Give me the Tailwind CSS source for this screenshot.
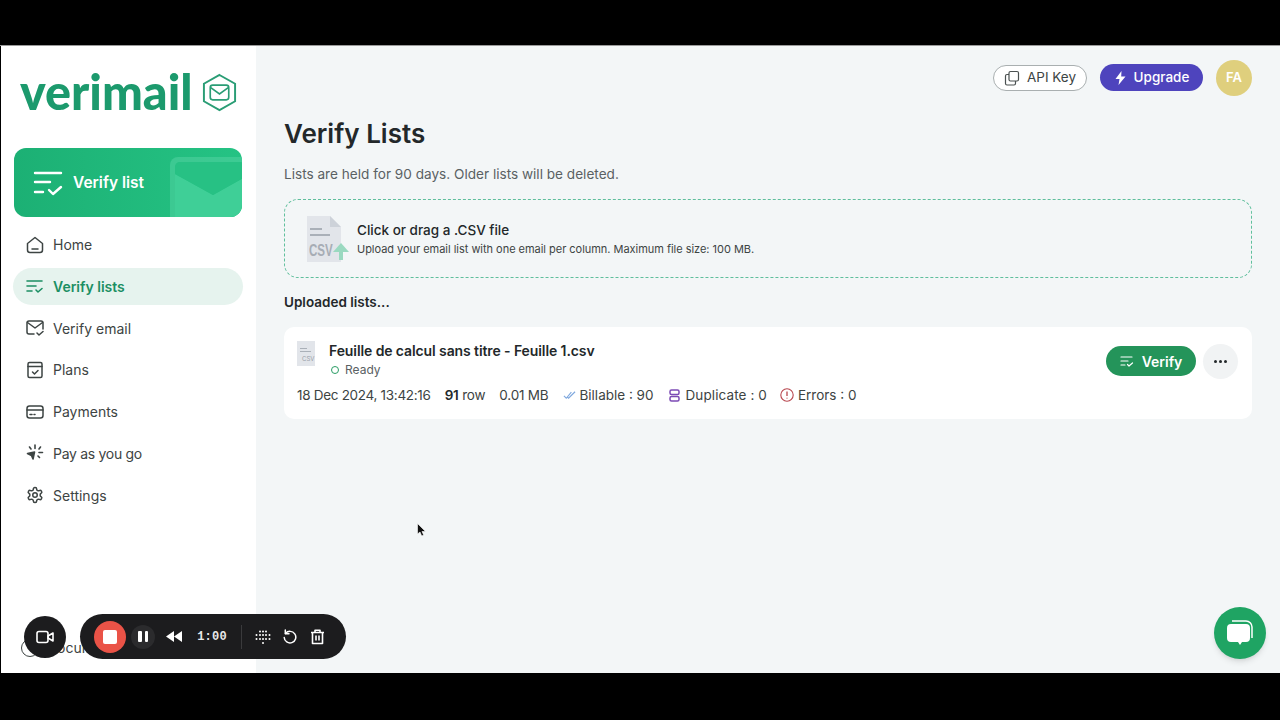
<!DOCTYPE html>
<html lang="en">
<head>
<meta charset="UTF-8">
<title>Verimail - Verify Lists</title>
<script src="https://cdn.jsdelivr.net/npm/@tailwindcss/browser@4"></script>
</head>
<body class="bg-black font-['Inter',sans-serif] overflow-hidden">
<div class="w-[1280px] h-[720px] pt-[45px] pb-[47px] bg-black">
  <div class="relative flex h-[628px] bg-[#f3f6f7] border-t border-[#9a9a9a]">

    <!-- Sidebar -->
    <aside class="w-[256px] h-full bg-white border-l border-black flex flex-col shrink-0">
      <div class="flex items-center gap-[8px] pl-[19px] h-[91px]">
        <span class="w-[173px] font-['Lato',sans-serif] font-black text-[48.5px] leading-none text-[#1c9a6d] whitespace-nowrap">verimail</span>
        <svg class="w-[37px] h-[39px] mt-[2px]" viewBox="0 0 38 40" fill="none" stroke="#2a9d75" stroke-width="2">
          <path d="M19 2 35 11V29L19 38 3 29V11Z"/>
          <rect x="9.5" y="12.5" width="19" height="15" rx="2.5" stroke-width="1.7"/>
          <path d="M10 15l9 6.5L28 15" stroke-width="1.7"/>
        </svg>
      </div>

      <div class="relative mt-[11px] ml-[13px] w-[228px] h-[69px] rounded-[12px] bg-gradient-to-r from-[#1cb074] to-[#25c384] overflow-hidden flex items-center pl-[19px] gap-[10px]">
        <svg class="w-[30px] h-[26px]" viewBox="0 0 30 26" fill="none" stroke="white" stroke-width="2.4" stroke-linecap="round" stroke-linejoin="round">
          <path d="M2 3h26M2 12h15M2 22h8M16 20l4 4 8-7"/>
        </svg>
        <span class="text-white font-semibold text-[15.5px]">Verify list</span>
        <div class="absolute left-[156px] top-[9px] w-[80px] h-[70px] rounded-[8px] bg-[#4fd19e]/60 p-[5px]">
          <div class="relative w-full h-full rounded-[5px] bg-[#2bc488] overflow-hidden">
            <svg class="absolute inset-0 w-full h-full" viewBox="0 0 70 60" preserveAspectRatio="none"><path d="M0 12 38 33 70 15V60H0Z" fill="#3fcf97"/><path d="M0 0H70V15L38 33 0 12Z" fill="#27c184"/></svg>
          </div>
        </div>
      </div>

      <nav class="mt-[9px] ml-[12px] w-[230px] flex flex-col gap-[4.8px] text-[14px] text-[#3d4443]">
        <a class="flex items-center gap-[9px] h-[37px] pl-[13px] rounded-full">
          <svg class="w-[18px] h-[18px]" viewBox="0 0 18 18" fill="none" stroke="#3d4443" stroke-width="1.5" stroke-linejoin="round" stroke-linecap="round"><path d="M1.5 7.5 9 1.5l7.5 6V14a2.5 2.5 0 0 1-2.5 2.5H4A2.5 2.5 0 0 1 1.5 14Z"/><path d="M6 13h6"/></svg>
          Home
        </a>
        <a class="flex items-center gap-[9px] h-[37px] pl-[13px] rounded-full bg-[#e6f3ee] text-[#1c8f63] font-semibold">
          <svg class="w-[18px] h-[18px]" viewBox="0 0 18 18" fill="none" stroke="#1c8f63" stroke-width="1.6" stroke-linecap="round" stroke-linejoin="round"><path d="M1 4h15M1 9h9M1 14h5M10 13l2 2 4-3.5"/></svg>
          Verify lists
        </a>
        <a class="flex items-center gap-[9px] h-[37px] pl-[13px] rounded-full">
          <svg class="w-[18px] h-[18px]" viewBox="0 0 18 18" fill="none" stroke="#3d4443" stroke-width="1.5" stroke-linecap="round" stroke-linejoin="round"><path d="M8 15H3a2 2 0 0 1-2-2V4a2 2 0 0 1 2-2h12a2 2 0 0 1 2 2v6"/><path d="M1.5 3.5 9 9l7.5-5.500M11 14l2 2 4-3.500"/></svg>
          Verify email
        </a>
        <a class="flex items-center gap-[9px] h-[37px] pl-[13px] rounded-full">
          <svg class="w-[18px] h-[18px]" viewBox="0 0 18 18" fill="none" stroke="#3d4443" stroke-width="1.5" stroke-linecap="round" stroke-linejoin="round"><rect x="2" y="1.5" width="14" height="15" rx="1.5"/><path d="M2 5.500h14M6.500 11l2 2 3.500-3.500"/></svg>
          Plans
        </a>
        <a class="flex items-center gap-[9px] h-[37px] pl-[13px] rounded-full">
          <svg class="w-[18px] h-[18px]" viewBox="0 0 18 18" fill="none" stroke="#3d4443" stroke-width="1.5" stroke-linecap="round" stroke-linejoin="round"><rect x="1" y="3" width="16" height="12" rx="2.5"/><path d="M1 7h16M4 11.500h2M8 11.500h1"/></svg>
          Payments
        </a>
        <a class="flex items-center gap-[9px] h-[37px] pl-[13px] rounded-full tracking-[-0.3px]">
          <svg class="w-[18px] h-[18px]" viewBox="0 0 18 18" fill="none" stroke="#3d4443" stroke-width="1.6" stroke-linecap="round" stroke-linejoin="round"><path d="M1.500 9.500 8.500 8 7 15 5.500 11.500Z" fill="#3d4443"/><path d="M9 1v3.500M3.500 3 5 5M14.500 3 13 5M13 8.500h3.500M12 12l1.500 1.500"/></svg>
          Pay as you go
        </a>
        <a class="flex items-center gap-[9px] h-[37px] pl-[13px] rounded-full">
          <svg class="w-[18px] h-[18px]" viewBox="0 0 24 24" fill="none" stroke="#3d4443" stroke-width="2" stroke-linecap="round" stroke-linejoin="round"><path d="M12.220 2h-.44a2 2 0 0 0-2 2v.18a2 2 0 0 1-1 1.730l-.43.25a2 2 0 0 1-2 0l-.15-.08a2 2 0 0 0-2.730.73l-.22.38a2 2 0 0 0 .73 2.730l.15.1a2 2 0 0 1 1 1.720v.51a2 2 0 0 1-1 1.740l-.15.09a2 2 0 0 0-.73 2.730l.22.38a2 2 0 0 0 2.730.73l.15-.08a2 2 0 0 1 2 0l.43.25a2 2 0 0 1 1 1.730V20a2 2 0 0 0 2 2h.44a2 2 0 0 0 2-2v-.18a2 2 0 0 1 1-1.730l.43-.25a2 2 0 0 1 2 0l.15.08a2 2 0 0 0 2.730-.73l.22-.39a2 2 0 0 0-.73-2.730l-.15-.08a2 2 0 0 1-1-1.740v-.5a2 2 0 0 1 1-1.740l.15-.09a2 2 0 0 0 .73-2.730l-.22-.38a2 2 0 0 0-2.730-.73l-.15.08a2 2 0 0 1-2 0l-.43-.25a2 2 0 0 1-1-1.730V4a2 2 0 0 0-2-2z"/><circle cx="12" cy="12" r="3"/></svg>
          Settings
        </a>
      </nav>

      <div class="mt-auto mb-[15px] ml-[20px] flex items-center gap-[8px] text-[14px] text-[#3d4443]">
        <span class="w-[18px] h-[18px] rounded-full border-[1.5px] border-[#3d4443]"></span>
        Documentation
      </div>
    </aside>

    <!-- Main -->
    <main class="flex-1 px-[28px] min-w-0">
      <div class="flex items-center justify-end h-[50px] pt-[13px] gap-[13px]">
        <button class="flex items-center gap-[7px] w-[94px] h-[26px] justify-center rounded-full border border-[#a9afb0] bg-white text-[13.5px] text-[#3d4443]">
          <svg class="w-[16px] h-[16px]" viewBox="0 0 16 16" fill="none" stroke="#4a5050" stroke-width="1.2"><rect x="5" y="1.500" width="9.500" height="9.500" rx="1.500"/><path d="M5 4.500H3A1.500 1.500 0 0 0 1.500 6v7.500A1.500 1.500 0 0 0 3 15h7a1.500 1.500 0 0 0 1.500-1.500V11"/></svg>
          API Key
        </button>
        <button class="flex items-center gap-[7px] w-[103px] h-[27px] justify-center rounded-full bg-[#4e44bd] text-[13.5px] font-medium text-white">
          <svg class="w-[13px] h-[14px]" viewBox="0 0 13 14" fill="white"><path d="M7.500 0 1.500 8h4L4.500 14l7-8.500H7.200Z"/></svg>
          Upgrade
        </button>
        <div class="w-[36px] h-[36px] rounded-full bg-[#dfcf7d] flex items-center justify-center text-white text-[13px] font-semibold">FA</div>
      </div>

      <h1 class="mt-[20px] text-[26px] leading-[36px] font-semibold text-[#23282a]">Verify Lists</h1>
      <p class="mt-[12px] text-[13.6px] leading-[20px] text-[#5a6163]">Lists are held for 90 days. Older lists will be deleted.</p>

      <div class="mt-[15px] h-[79px] rounded-[14px] border-[1.5px] border-dashed border-[#5fbf9c] flex items-center pl-[21px] gap-[15px]">
        <div class="relative w-[36px] h-[46px]">
          <svg class="absolute left-0 top-0 w-[36px] h-[46px] overflow-visible" viewBox="0 0 36 46">
            <path d="M1 0H24L35 11V46H1Z" fill="#e2e5ea"/><path d="M24 0 35 11H24Z" fill="#cdd2d9"/>
            <path d="M4 13h12M4 19h20" stroke="#aab0b8" stroke-width="2"/>
            <path d="M35 44V35" stroke="#9ad9c0" stroke-width="4"/>
            <path d="M27 36 35 27 43 36Z" fill="#9ad9c0"/>
          </svg>
          <span class="absolute left-[3px] top-[27px] font-['Liberation_Sans',sans-serif] text-[17px] leading-[16px] font-bold scale-x-[0.68] origin-left text-[#a7adb5]">CSV</span>
        </div>
        <div class="mt-[1px]">
          <div class="text-[13.500px] leading-[20px] font-medium text-[#23282a]">Click or drag a .CSV file</div>
          <div class="text-[11px] leading-[19px] tracking-[-0.03px] text-[#3d4443]">Upload your email list with one email per column. Maximum file size: 100 MB.</div>
        </div>
      </div>

      <h2 class="mt-[14px] text-[13.500px] leading-[20px] font-semibold text-[#23282a]">Uploaded lists...</h2>

      <div class="mt-[15px] h-[92px] rounded-[10px] bg-white pl-[13px] pr-[14px] relative">
        <div class="flex items-start pt-[14px] h-[57px]">
          <div class="relative w-[18px] h-[25px] bg-[#e2e5ea] mr-[14px]">
            <div class="absolute left-[3px] top-[7px] w-[7px] h-px bg-[#aab0b8]"></div>
            <div class="absolute left-[3px] top-[10px] w-[11px] h-px bg-[#aab0b8]"></div>
            <span class="absolute left-[5px] top-[14px] text-[6px] leading-[8px] text-[#99a0a8]">CSV</span>
          </div>
          <div class="flex-1">
            <div class="text-[14px] leading-[20px] tracking-[-0.1px] font-semibold text-[#23282a]">Feuille de calcul sans titre - Feuille 1.csv</div>
            <div class="flex items-center gap-[6px] pl-[2px] text-[12px] leading-[18px] text-[#5a6163]">
              <span class="w-[8px] h-[8px] rounded-full border border-[#2a9d65]"></span>Ready
            </div>
          </div>
          <button class="mt-[5px] flex items-center justify-center gap-[8px] w-[90px] h-[30px] rounded-full bg-[#24945a] text-white text-[14px] font-semibold">
            <svg class="w-[14px] h-[14px]" viewBox="0 0 14 14" fill="none" stroke="white" stroke-width="1.200" stroke-linecap="round" stroke-linejoin="round"><path d="M1 3h11M1 7h7M1 11h4M7.500 10.500l1.500 1.500 3.500-3"/></svg>
            Verify
          </button>
          <button class="ml-[7px] mt-[3px] w-[35px] h-[35px] rounded-full bg-[#f1f3f4] flex items-center justify-center gap-[2px]">
            <span class="w-[3px] h-[3px] rounded-full bg-[#23282a]"></span>
            <span class="w-[3px] h-[3px] rounded-full bg-[#23282a]"></span>
            <span class="w-[3px] h-[3px] rounded-full bg-[#23282a]"></span>
          </button>
        </div>
        <div class="flex items-center h-[22px] text-[13.5px] text-[#3d4443]">
          <span class="tracking-[-0.3px]">18 Dec 2024, 13:42:16</span>
          <span class="ml-[14px] tracking-[-0.2px]"><b class="font-semibold text-[#23282a]">91</b> row</span>
          <span class="ml-[14px] tracking-[-0.2px]">0.01 MB</span>
          <svg class="ml-[14px] mr-[4px] w-[13px] h-[10px]" viewBox="0 0 14 10" fill="none" stroke="#7fa8de" stroke-width="1.200"><path d="M1 6l2.500 2.500L9 2M5 7.500l1 1L13 1.500"/></svg>
          <span>Billable : 90</span>
          <svg class="ml-[15px] mr-[5px] w-[11px] h-[13px]" viewBox="0 0 11 13" fill="none" stroke="#7c4bb5" stroke-width="1.500"><rect x="1" y="1" width="9" height="4.500" rx="1.500"/><rect x="1" y="7.500" width="9" height="4.500" rx="1.500"/></svg>
          <span class="tracking-[0.1px] ml-[1px]">Duplicate : 0</span>
          <svg class="ml-[13px] mr-[4px] w-[14px] h-[14px]" viewBox="0 0 14 14" fill="none" stroke="#b8474f" stroke-width="1.100"><circle cx="7" cy="7" r="6.200"/><path d="M7 3.500v4.500M7 9.800v.7" stroke-width="1.300"/></svg>
          <span>Errors : 0</span>
        </div>
      </div>
    </main>

    <!-- Mouse cursor -->
    <svg class="absolute left-[417px] top-[477px] w-[10px] h-[15px]" viewBox="0 0 10 15"><path d="M.5.5V11l2.500-2 1.700 4 2-.9L5 8.500h3.500Z" fill="#111" stroke="white" stroke-width=".6"/></svg>

    <!-- Screen recorder controls -->
    <div class="absolute left-[24px] top-[570px] w-[42px] h-[42px] rounded-full bg-[#1c1c1e] flex items-center justify-center">
      <svg class="w-[18px] h-[14px]" viewBox="0 0 18 14" fill="none" stroke="white" stroke-width="1.600" stroke-linejoin="round"><rect x="1" y="1.500" width="11" height="11" rx="2"/><path d="M12 6l5-3v8l-5-3Z"/></svg>
    </div>
    <div class="absolute left-[80px] top-[568px] w-[266px] h-[45px] rounded-full bg-[#1c1c1e] flex items-center pl-[14px] text-white">
      <div class="w-[32px] h-[32px] rounded-full bg-[#ea5347] flex items-center justify-center">
        <div class="w-[14px] h-[14px] rounded-[2px] bg-white"></div>
      </div>
      <div class="ml-[5px] w-[24px] h-[24px] rounded-full bg-[#2b2b2d] flex items-center justify-center gap-[3px]">
        <span class="w-[3.500px] h-[11px] rounded-[1px] bg-white"></span>
        <span class="w-[3.500px] h-[11px] rounded-[1px] bg-white"></span>
      </div>
      <svg class="ml-[11px] w-[16px] h-[11px]" viewBox="0 0 16 11" fill="white"><path d="M8 0v11L0 5.500ZM16 0v11L8 5.500Z"/></svg>
      <span class="ml-[14px] w-[32px] font-['Liberation_Mono',monospace] text-[12px] font-bold tracking-[0.2px] text-[#e8e8e8] text-center">1:00</span>
      <div class="ml-[13px] w-px h-[24px] bg-[#3a3a3c]"></div>
      <svg class="ml-[13px] w-[16px] h-[16px]" viewBox="0 0 16 16" fill="white"><circle cx="1.500" cy="6" r="1"/><circle cx="1.500" cy="10" r="1"/><circle cx="5" cy="2.500" r="1"/><circle cx="5" cy="6" r="1"/><circle cx="5" cy="10" r="1"/><circle cx="8" cy="2.500" r="1"/><circle cx="8" cy="6" r="1"/><circle cx="8" cy="10" r="1"/><circle cx="8" cy="14" r="1"/><circle cx="11" cy="2.500" r="1"/><circle cx="11" cy="6" r="1"/><circle cx="11" cy="10" r="1"/><circle cx="14.500" cy="6" r="1"/><circle cx="14.500" cy="10" r="1"/></svg>
      <svg class="ml-[12px] w-[14px] h-[15px]" viewBox="0 0 14 15" fill="none" stroke="white" stroke-width="1.500" stroke-linecap="round" stroke-linejoin="round"><path d="M2.500 4.500A5.800 5.800 0 1 1 1.200 8.500"/><path d="M2.300 1v3.700H6"/></svg>
      <svg class="ml-[13px] w-[15px] h-[16px]" viewBox="0 0 15 16" fill="none" stroke="white" stroke-width="1.600" stroke-linejoin="round"><path d="M1 3.500h13M5 3.500V1.200h5v2.300M2.500 3.500v11h10v-11M6 6.500v5M9 6.500v5"/></svg>
    </div>

    <!-- Chat bubble -->
    <div class="absolute left-[1214px] top-[561px] w-[52px] h-[52px] rounded-full bg-[#1fa463] shadow-md flex items-center justify-center">
      <svg class="w-[28px] h-[28px]" viewBox="0 0 28 28"><path d="M6 2h14a6 6 0 0 1 6 6v11" fill="none" stroke="white" stroke-width="1.500"/><path d="M5 5h15a4 4 0 0 1 4 4v10a4 4 0 0 1-4 4h-4l-2 3-2-3H5a4 4 0 0 1-4-4V9a4 4 0 0 1 4-4Z" fill="white"/></svg>
    </div>
  </div>
</div>
</body>
</html>
